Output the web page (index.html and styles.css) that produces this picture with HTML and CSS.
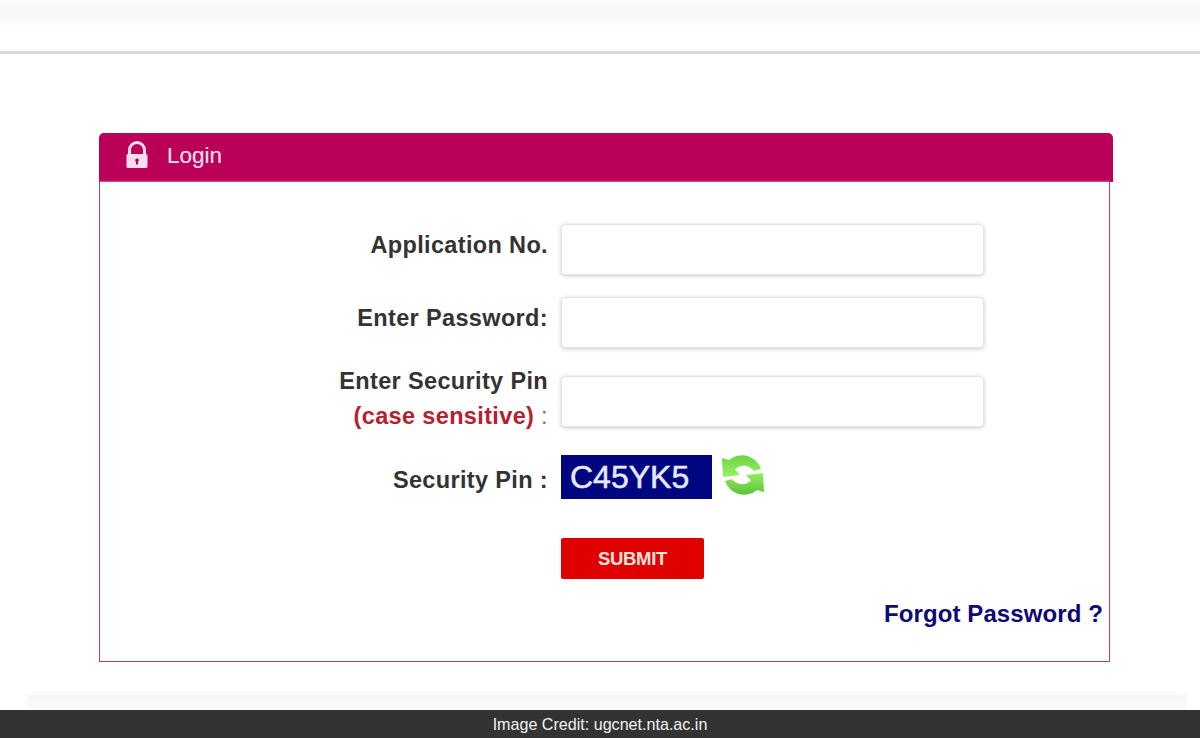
FILE: index.html
```html
<!DOCTYPE html>
<html lang="en">
<head>
<meta charset="utf-8">
<title>Login</title>
<link rel="stylesheet" href="styles.css">
</head>
<body>
<div class="page">
  <div class="topbar"><div class="topband"></div></div>
  <main class="main">
    <section class="panel">
      <header class="panel-head">
        <svg class="lock" viewBox="0 0 22 28" width="22" height="28" aria-hidden="true">
          <path d="M3.500 14V9a7.500 7.500 0 0 1 15 0v5" fill="none" stroke="#fbdcec" stroke-width="3"/>
          <path fill-rule="evenodd" d="M2 13h18a1.500 1.500 0 0 1 1.500 1.500v11A1.500 1.500 0 0 1 20 27H2a1.500 1.500 0 0 1-1.500-1.500v-11A1.500 1.500 0 0 1 2 13zM11 17.500a1.800 1.800 0 0 0-1 3.300V23.500h2v-2.700a1.800 1.800 0 0 0-1-3.300z" fill="#fbdcec"/>
        </svg>
        <span class="panel-title">Login</span>
      </header>
      <div class="panel-body">
        <form class="form">
          <label class="label l-app">Application No.</label>
          <input class="field f-app" type="text">
          <label class="label l-pass">Enter Password:</label>
          <input class="field f-pass" type="password">
          <label class="label l-pin">Enter Security Pin<br><span class="case">(case sensitive)</span><span class="colon"> :</span></label>
          <input class="field f-pin" type="text">
          <label class="label l-sec">Security Pin :</label>
          <div class="captcha-row">
            <div class="captcha">C45YK5</div>
            <svg class="refresh" viewBox="0 0 46 46" width="46" height="46" aria-hidden="true">
              <defs>
                <linearGradient id="gTop" x1="0" y1="0" x2="0" y2="1">
                  <stop offset="0" stop-color="#6ad63f"/>
                  <stop offset="1" stop-color="#9af066"/>
                </linearGradient>
                <linearGradient id="gBottom" x1="0" y1="0" x2="0" y2="1">
                  <stop offset="0" stop-color="#96ee60"/>
                  <stop offset="1" stop-color="#5cc23a"/>
                </linearGradient>
              </defs>
              <path d="M41 17A20 20 0 0 0 9 8L2 6L3 25L20 23L15 17.500A12.500 12.500 0 0 1 34 19Z" fill="url(#gTop)"/>
              <path d="M5 29A20 20 0 0 0 37 38L44 40L43 21L26 23L31 28.500A12.500 12.500 0 0 1 12 27Z" fill="url(#gBottom)"/>
            </svg>
          </div>
          <button class="submit" type="button">SUBMIT</button>
        </form>
        <a class="forgot" href="#">Forgot Password ?</a>
      </div>
    </section>
  </main>
  <div class="shade"></div>
  <footer class="credit">Image Credit: ugcnet.nta.ac.in</footer>
</div>
</body>
</html>
```
FILE: styles.css
```css
* { box-sizing: border-box; }
html, body { margin: 0; padding: 0; background: #fff; }
body { font-family: "Liberation Sans", Arial, sans-serif; }
.page { width: 1200px; height: 738px; display: flex; flex-direction: column; overflow: hidden; }
.topbar { height: 54px; border-bottom: 3px solid #d9d9d9; flex: none; }
.topband { height: 25px; background: linear-gradient(#fafafa, #f6f6f6 55%, #fdfdfd); }
.main { flex: 1; padding: 79px 0 0 99px; }
.panel { width: 1011px; }
.panel-head { width: 1014px; height: 49px; background: #bb0058; border-radius: 5px 5px 0 0; display: flex; align-items: center; padding-left: 27px; gap: 19px; color: #fbdcec; }
.lock { flex: none; margin-bottom: 6px; }
.panel-title { font-size: 22.500px; margin-bottom: 4px; -webkit-text-stroke: 0.200px #fbdcec; }
.panel-body { height: 480px; border: 1px solid #93527c; border-top: 0; padding-top: 42px; position: relative; box-shadow: 0 0 2px #f6dfec, inset 0 0 2px #f6dfec; }
.form { display: grid; grid-template-columns: 448px 423px; column-gap: 13px; align-items: start; }
.label { font-size: 23.500px; font-weight: 700; color: #333; text-align: right; letter-spacing: 0.350px; }
.l-app { height: 73px; padding-top: 8px; }
.l-pass { height: 79px; padding-top: 8px; }
.l-pin { height: 79px; line-height: 35px; margin-top: -12px; }
.l-sec { padding-top: 12px; height: 83px; }
.case { color: #b8202f; }
.colon { color: #777; font-weight: 400; }
.field { width: 423px; height: 51px; border: 1px solid #e4e4e4; border-radius: 4px; background: #fff; box-shadow: 0 1px 4px rgba(0,0,0,.2); display: block; }
.f-app { margin-bottom: 22px; }
.f-pass { margin-bottom: 28px; }
.f-pin { margin-bottom: 28px; }
.captcha-row { display: flex; align-items: center; gap: 8px; height: 44px; }
.captcha { width: 151px; height: 44px; background: #000680; color: #e6e9fb; font-size: 32px; line-height: 44px; padding-left: 9px; -webkit-text-stroke: 0.500px #e6e9fb; }
.refresh { flex: none; margin-top: -4px; }
.submit { grid-column: 2; width: 143px; height: 41px; background: #df0000; color: #fde3dc; border: 0; border-radius: 2px; font: 700 18.500px "Liberation Sans", Arial, sans-serif; padding: 0; letter-spacing: -0.300px; }
.forgot { position: absolute; right: 6px; top: 418px; font-size: 24px; font-weight: 700; color: #0d0a78; text-decoration: none; letter-spacing: 0.100px; }
.shade { flex: none; height: 15px; margin: 0 14px 0 28px; background: linear-gradient(#f7f6f7, #fafafa); box-shadow: 0 0 6px #f7f6f7; }
.credit { flex: none; height: 28px; background: #333; color: #f2f2f2; font-size: 16.100px; line-height: 28px; text-align: center; position: relative; }
```
